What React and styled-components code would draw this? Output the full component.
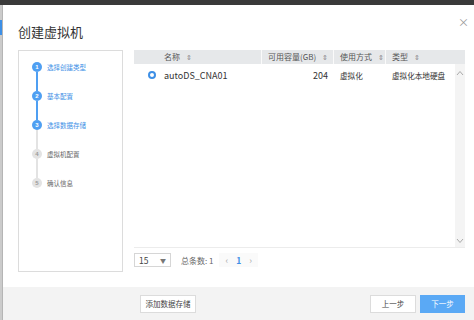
import styled, { createGlobalStyle } from "styled-components";

const GlobalStyle = createGlobalStyle`
  html, body {
    margin: 0;
    padding: 0;
    width: 474px;
    height: 320px;
    overflow: hidden;
    background: #fff;
  }
  body {
    font-family: "Noto Sans CJK SC", "Noto Sans", sans-serif;
    color: #333;
  }
`;

const Page = styled.div`
  display: flex;
  flex-direction: column;
  width: 474px;
  height: 320px;
`;

const TopBar = styled.div`
  height: 5px;
  background: #3a3a3a;
`;

const Body = styled.div`
  flex: 1;
  display: flex;
  min-height: 0;
`;

const BackStrip = styled.div`
  width: 5px;
  background: #cbcbcb;
  border-right: 1px solid #b5b5b5;
  display: flex;
  flex-direction: column;
  padding-top: 15px;
  box-sizing: border-box;
`;

const BackMark = styled.div`
  align-self: flex-end;
  width: 2px;
  height: 15px;
  background: #3d8fe6;
`;

const Dialog = styled.div`
  flex: 1;
  display: flex;
  flex-direction: column;
  background: #fff;
`;

const TitleRow = styled.div`
  height: 45px;
  display: flex;
  align-items: flex-start;
  justify-content: space-between;
  padding: 19px 8px 0 15px;
  box-sizing: border-box;
`;

const Title = styled.h1`
  margin: 0;
  font-size: 13px;
  font-weight: 400;
  line-height: 16px;
  color: #333;
`;

const Close = styled.span`
  font-size: 11px;
  line-height: 11px;
  color: #999;
  margin-top: -7px;
`;

const Content = styled.div`
  flex: 1;
  display: grid;
  grid-template-columns: 105px 1fr;
  column-gap: 11px;
  padding: 0 12px 0 15px;
  min-height: 0;
`;

const StepsPanel = styled.div`
  height: 222px;
  border: 1px solid #dcdcdc;
  box-sizing: border-box;
  padding: 11px 0 0 13px;
`;

const StepItem = styled.div`
  display: flex;
  gap: 5px;
`;

const Marker = styled.div`
  display: flex;
  flex-direction: column;
  align-items: center;
  width: 10px;
`;

const Circle = styled.div`
  width: 10px;
  height: 10px;
  border-radius: 50%;
  background: ${(p) => (p.$active ? "#4f9ff2" : "#e3e3e3")};
  color: ${(p) => (p.$active ? "#fff" : "#999")};
  font-family: "Liberation Sans", Arial, sans-serif;
  font-size: 6px;
  font-weight: 700;
  line-height: 10px;
  text-align: center;
`;

const Connector = styled.div`
  width: 2px;
  height: 19px;
  background: ${(p) => (p.$active ? "#4f9ff2" : "#e3e3e3")};
`;

const StepLabel = styled.span`
  font-size: 6.5px;
  line-height: 10px;
  color: ${(p) => (p.$active ? "#3d8fe6" : "#666")};
`;

const TableArea = styled.div`
  display: flex;
  flex-direction: column;
`;

const Header = styled.div`
  display: flex;
  height: 14px;
  background: #e6e8ea;
  font-size: 8px;
  line-height: 14px;
  color: #555;
`;

const Cell = styled.div`
  width: ${(p) => (p.$w ? `${p.$w}px` : "auto")};
  flex: ${(p) => (p.$w ? "none" : "1")};
  box-sizing: border-box;
  padding: 0 6px;
  white-space: nowrap;
  font-size: ${(p) => (p.$cjk ? "7.6px" : "inherit")};
  text-align: ${(p) => p.$align || "left"};
  border-right: ${(p) => (p.$divider ? "1px solid #fafafa" : "none")};
`;

const Sort = styled.span`
  margin-left: 6px;
  font-size: 7px;
  color: #888;
`;

const BodyWrap = styled.div`
  height: 183px;
  display: flex;
  border-bottom: 1px solid #ececec;
`;

const Rows = styled.div`
  flex: 1;
`;

const Row = styled.div`
  display: flex;
  height: 22px;
  align-items: center;
  font-size: 9px;
  color: #333;
`;

const Radio = styled.span`
  display: inline-block;
  width: 4px;
  height: 4px;
  border-radius: 50%;
  border: 2.5px solid #3d8fe6;
  background: #fff;
  margin-left: 8px;
`;

const Scrollbar = styled.div`
  width: 10px;
  background: #f4f4f4;
  display: flex;
  flex-direction: column;
  justify-content: space-between;
  align-items: center;
  padding: 6px 0 3px;
  box-sizing: border-box;
  color: #b0b0b0;
`;

const Pager = styled.div`
  display: flex;
  align-items: center;
  height: 14px;
  margin-top: 5px;
  font-size: 8.5px;
  color: #666;
`;

const SizeSelect = styled.div`
  width: 37px;
  height: 14px;
  box-sizing: border-box;
  border: 1px solid #d6d6d6;
  display: flex;
  align-items: center;
  justify-content: space-between;
  padding: 0 4px 0 4px;
  color: #444;
`;

const Caret = styled.span`
  font-size: 6px;
  color: #777;
`;

const Total = styled.span`
  margin-left: 10px;
  font-size: 8px;
`;

const PageNav = styled.div`
  display: flex;
  align-items: center;
  gap: 8px;
  margin-left: 6px;
  padding: 0 6px;
  height: 14px;
  background: #fafafa;
`;

const NavArrow = styled.span`
  color: #aaa;
  font-size: 9px;
`;

const PageNum = styled.span`
  color: #3d8fe6;
  font-weight: 700;
`;

const Footer = styled.div`
  height: 33px;
  background: #f3f3f3;
  display: grid;
  grid-template-columns: 105px 1fr;
  column-gap: 11px;
  align-items: center;
  padding: 0 12px 0 15px;
`;

const FooterActions = styled.div`
  display: flex;
  align-items: center;
  padding-left: 6px;
`;

const Button = styled.button`
  height: 18px;
  width: ${(p) => p.$w}px;
  box-sizing: border-box;
  border: 1px solid ${(p) => (p.$primary ? "#5aa9f5" : "#dcdcdc")};
  background: ${(p) => (p.$primary ? "#5aa9f5" : "#fff")};
  color: ${(p) => (p.$primary ? "#fff" : "#444")};
  font-family: "Noto Sans CJK SC", sans-serif;
  font-size: 7.5px;
  padding: 0;
  margin-left: ${(p) => p.$ml || 0}px;
`;

const steps = [
  { label: "选择创建类型", active: true },
  { label: "基本配置", active: true },
  { label: "选择数据存储", active: true },
  { label: "虚拟机配置", active: false },
  { label: "确认信息", active: false },
];

export default function App() {
  return (
    <Page>
      <GlobalStyle />
      <TopBar />
      <Body>
        <BackStrip>
          <BackMark />
        </BackStrip>
        <Dialog>
          <TitleRow>
            <Title>创建虚拟机</Title>
            <Close>×</Close>
          </TitleRow>
          <Content>
            <StepsPanel>
              {steps.map((s, i) => (
                <StepItem key={s.label}>
                  <Marker>
                    <Circle $active={s.active}>{i + 1}</Circle>
                    {i < steps.length - 1 && (
                      <Connector $active={steps[i + 1].active} />
                    )}
                  </Marker>
                  <StepLabel $active={s.active}>{s.label}</StepLabel>
                </StepItem>
              ))}
            </StepsPanel>
            <TableArea>
              <Header>
                <Cell $w={24} />
                <Cell $w={104} $divider>
                  名称<Sort>⇕</Sort>
                </Cell>
                <Cell $w={72} $divider>
                  可用容量(GB)<Sort>⇕</Sort>
                </Cell>
                <Cell $w={52} $divider>
                  使用方式<Sort>⇕</Sort>
                </Cell>
                <Cell>
                  类型<Sort>⇕</Sort>
                </Cell>
              </Header>
              <BodyWrap>
                <Rows>
                  <Row>
                    <Cell $w={24}>
                      <Radio />
                    </Cell>
                    <Cell $w={104}>autoDS_CNA01</Cell>
                    <Cell $w={72} $align="right">
                      204
                    </Cell>
                    <Cell $w={52} $cjk>
                      虚拟化
                    </Cell>
                    <Cell $cjk>虚拟化本地硬盘</Cell>
                  </Row>
                </Rows>
                <Scrollbar>
                  <svg width="8" height="6" viewBox="0 0 8 6">
                    <path d="M1 5 L4 1.5 L7 5" fill="none" stroke="#aaa" strokeWidth="1" />
                  </svg>
                  <svg width="8" height="6" viewBox="0 0 8 6">
                    <path d="M1 1 L4 4.5 L7 1" fill="none" stroke="#aaa" strokeWidth="1" />
                  </svg>
                </Scrollbar>
              </BodyWrap>
              <Pager>
                <SizeSelect>
                  15<Caret>▼</Caret>
                </SizeSelect>
                <Total>总条数: 1</Total>
                <PageNav>
                  <NavArrow>‹</NavArrow>
                  <PageNum>1</PageNum>
                  <NavArrow>›</NavArrow>
                </PageNav>
              </Pager>
            </TableArea>
          </Content>
          <Footer>
            <span />
            <FooterActions>
              <Button $w={56}>添加数据存储</Button>
              <Button $w={46} $ml={174}>
                上一步
              </Button>
              <Button $w={45} $ml={4} $primary>
                下一步
              </Button>
            </FooterActions>
          </Footer>
        </Dialog>
      </Body>
    </Page>
  );
}
